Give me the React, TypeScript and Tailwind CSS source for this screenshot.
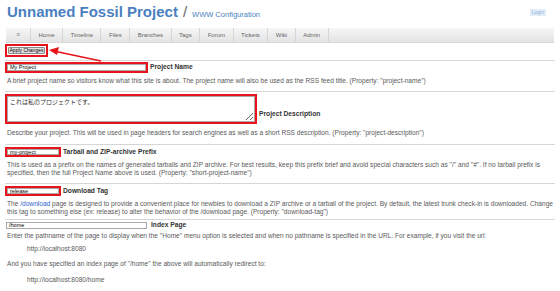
import React from "react";

const navItems = ["Home", "Timeline", "Files", "Branches", "Tags", "Forum", "Tickets", "Wiki", "Admin"];

const Desc: React.FC<{ className?: string; children: React.ReactNode }> = ({ className, children }) => (
  <p className={"pl-[2px] text-[6.6px] leading-[8px] text-[#5a5a5a] " + (className ?? "mt-[4px]")}>{children}</p>
);

const Rule: React.FC<{ className?: string }> = ({ className }) => (
  <div className={"border-t border-[#d6d6d6] " + (className ?? "mt-[6px]")} />
);

const Label: React.FC<{ children: React.ReactNode }> = ({ children }) => (
  <span className="text-[6.7px] font-bold text-[#333] leading-none">{children}</span>
);

const Field: React.FC<{ value: string; width: string; red?: boolean; h?: string }> = ({ value, width, red, h }) => {
  const box = (
    <div
      className={
        "w-full border border-[#a9a9a9] bg-white px-[2px] text-[5.5px] leading-[4px] text-black whitespace-nowrap " +
        (h ?? "h-[6px]")
      }
    >
      {value}
    </div>
  );
  return red ? (
    <div className={width + " border-2 border-[#e8141b]"}>{box}</div>
  ) : (
    <div className={width + " p-[1px]"}>{box}</div>
  );
};

export default function App() {
  return (
    <div
      className="relative h-[291px] w-[560px] overflow-hidden bg-white"
      style={{ fontFamily: '"Liberation Sans", Arial, sans-serif' }}
    >
      {/* header */}
      <div className="flex h-[28px] items-start px-[7px] pt-[3px]">
        <div className="flex items-baseline">
          <span className="text-[15px] font-bold leading-[18px] text-[#4a7fc0]">Unnamed Fossil Project</span>
          <span className="ml-[5px] text-[15px] leading-[18px] text-[#666]">/</span>
          <span className="ml-[5px] text-[7.5px] text-[#4a7fc0]">WWW Configuration</span>
        </div>
        <span className="ml-auto mr-[7px] mt-[6px] bg-[#e3edf8] px-[2px] text-[5px] leading-[7px] text-[#8fb2dc]">Login</span>
      </div>

      <div className="px-[5px]">
        {/* nav */}
        <div className="mx-px flex h-[15px] items-center border-b border-[#d9d9d9] bg-gradient-to-b from-[#f6f6f6] to-[#e4e4e4] text-[6px] text-[#666]">
          <div className="flex h-full w-[25px] items-center justify-center border-r border-[#d6d6d6] text-[7px] text-[#888]">≡</div>
          {navItems.map((item) => (
            <div key={item} className="flex h-full items-center border-r border-[#d6d6d6] px-[7.5px]">
              {item}
            </div>
          ))}
        </div>

        {/* apply */}
        <div className="mt-[1px] w-[43px] border-2 border-[#e8141b] p-[1px]">
          <button className="block h-[7px] w-full rounded-[1px] border border-[#8a8a8a] bg-[#e4e4e4] text-[5px] leading-none text-black">
            Apply Changes
          </button>
        </div>

        <Rule className="mt-[3px]" />

        {/* project name */}
        <div className="mt-[1px] flex items-center gap-[2px]">
          <Field value="My Project" width="w-[143px]" red h="h-[7px]" />
          <Label>Project Name</Label>
        </div>
        <Desc>
          A brief project name so visitors know what this site is about. The project name will also be used as the RSS feed title. (Property: "project-name")
        </Desc>
        <Rule />

        {/* description */}
        <div className="mt-[2px] flex items-end gap-[2px]">
          <div className="w-[252px] border-2 border-[#e8141b]">
            <textarea
              readOnly
              value="これは私のプロジェクトです。"
              className="block h-[26px] w-full resize-y border border-[#a9a9a9] bg-white px-[2px] py-[1px] text-[6px] leading-[8px] text-[#333] outline-none"
              style={{ fontFamily: '"Liberation Sans", "Noto Sans CJK JP", sans-serif' }}
            />
          </div>
          <div className="pb-[1px]">
            <Label>Project Description</Label>
          </div>
        </div>
        <Desc className="mt-[5px]">
          Describe your project. This will be used in page headers for search engines as well as a short RSS description. (Property: "project-description")
        </Desc>
        <Rule className="mt-[7px]" />

        {/* tarball prefix */}
        <div className="mt-[2px] flex items-center gap-[2px]">
          <Field value="my-project" width="w-[56px]" red />
          <Label>Tarball and ZIP-archive Prefix</Label>
        </div>
        <Desc>
          This is used as a prefix on the names of generated tarballs and ZIP archive. For best results, keep this prefix brief and avoid special characters such as "/" and "#". If no tarball prefix is specified, then the full Project Name above is used. (Property: "short-project-name")
        </Desc>
        <Rule />

        {/* download tag */}
        <div className="mt-[2px] flex items-center gap-[2px]">
          <Field value="release" width="w-[56px]" red />
          <Label>Download Tag</Label>
        </div>
        <Desc>
          The <a className="text-[#3366cc]">/download</a> page is designed to provide a convenient place for newbies to download a ZIP archive or a tarball of the project. By default, the latest trunk check-in is downloaded. Change this tag to something else (ex: release) to alter the behavior of the /download page. (Property: "download-tag")
        </Desc>
        <Rule className="mt-[3px]" />

        {/* index page */}
        <div className="mt-[1px] flex items-center gap-[3px]">
          <Field value="/home" width="w-[143px]" h="h-[7px]" />
          <Label>Index Page</Label>
        </div>
        <Desc className="mt-[2px]">
          Enter the pathname of the page to display when the "Home" menu option is selected and when no pathname is specified in the URL. For example, if you visit the url:
        </Desc>
        <Desc className="mt-[5px] pl-[22px]">http://localhost:8080</Desc>
        <Desc className="mt-[7px]">
          And you have specified an index page of "/home" the above will automatically redirect to:
        </Desc>
        <Desc className="mt-[8px] pl-[22px]">http://localhost:8080/home</Desc>
      </div>

      {/* red arrow annotation */}
      <svg className="pointer-events-none absolute left-0 top-0" width="560" height="291">
        <line x1="101" y1="61" x2="56" y2="51.5" stroke="#e8141b" strokeWidth="1.6" />
        <polygon points="49,50 59,47 57,55" fill="#e8141b" />
      </svg>
    </div>
  );
}
